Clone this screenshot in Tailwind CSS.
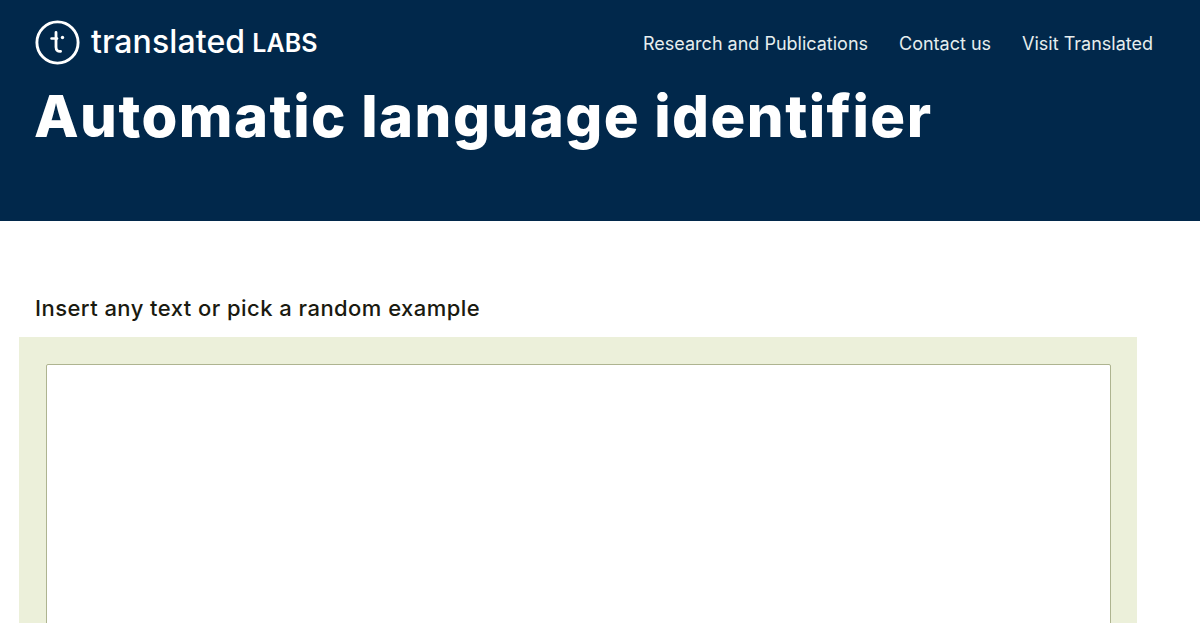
<!DOCTYPE html>
<html lang="en">
<head>
  <meta charset="UTF-8" />
  <meta name="viewport" content="width=device-width, initial-scale=1.0"/>
  <title>Automatic language identifier</title>
  <script src="https://cdn.jsdelivr.net/npm/@tailwindcss/browser@4"></script>
</head>
<body class="bg-white h-[623px] overflow-hidden font-['Inter',sans-serif]">
  <header class="bg-[#01284b] h-[221px] pl-[35px] pr-[47px] pt-[19px] text-white">
    <div class="flex items-center justify-between h-[46px]">
      <!-- logo -->
      <div class="flex items-center">
        <svg width="45" height="45" viewBox="0 0 45 45" fill="none" stroke="white" class="shrink-0">
          <circle cx="22.5" cy="22.5" r="20.6" stroke-width="2.9"/>
          <path d="M21 12.5V27c0 3 1.6 4.6 4.6 4.4" stroke-width="2.8" stroke-linecap="round"/>
          <path d="M16.5 18.6h5.5" stroke-width="2.5" stroke-linecap="round"/>
          <circle cx="27.5" cy="17.5" r="1.7" fill="white" stroke="none"/>
        </svg>
        <span class="ml-[11px] text-[32px] leading-none font-medium tracking-[0.1px]">translated</span>
        <span class="ml-[7px] mt-[2px] text-[25px] leading-none font-semibold tracking-[0.1px]">LABS</span>
      </div>
      <nav class="flex gap-[31px] mt-[3px] text-[18px] text-[#e6eeee]">
        <a>Research and Publications</a>
        <a>Contact us</a>
        <a>Visit Translated</a>
      </nav>
    </div>
    <h1 class="mt-[16px] -ml-[1px] text-[58px] leading-[70px] font-extrabold tracking-[1.45px]">Automatic language identifier</h1>
  </header>
  <main>
    <p class="ml-[35px] mt-[73px] text-[22px] leading-[28px] font-medium tracking-[0.45px] text-[#1a1a10]">Insert any text or pick a random example</p>
    <div class="ml-[19px] mt-[15px] w-[1118px] h-[286px] overflow-hidden bg-[#ecf0da] pt-[27px] pl-[27px] pr-[26px]">
      <textarea class="block w-full h-[300px] bg-white border border-[#aeb490] rounded-[2px] resize-none"></textarea>
    </div>
  </main>
</body>
</html>
